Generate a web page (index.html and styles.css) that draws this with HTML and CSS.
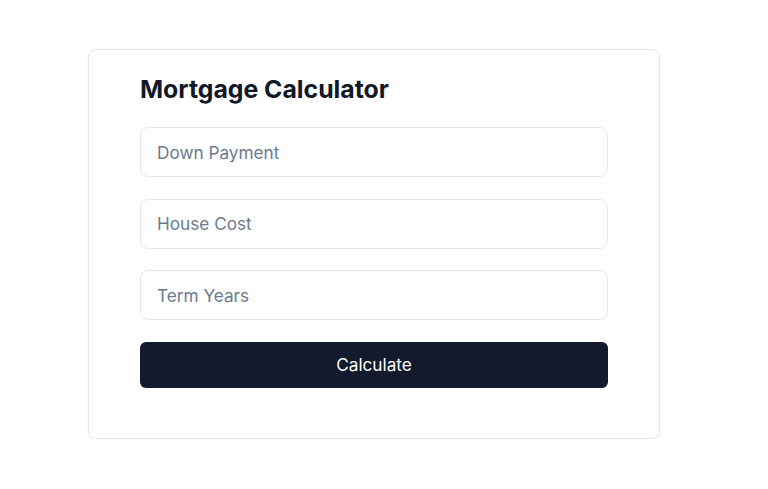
FILE: index.html
```html
<!DOCTYPE html>
<html>
<head>
<meta charset="utf-8">
<link rel="stylesheet" href="styles.css">
</head>
<body>
<div class="card">
  <h1 class="title">Mortgage Calculator</h1>
  <form class="form">
    <input class="field" type="text" placeholder="Down Payment">
    <input class="field" type="text" placeholder="House Cost">
    <input class="field" type="text" placeholder="Term Years">
    <button class="btn" type="button">Calculate</button>
  </form>
</div>
</body>
</html>
```
FILE: styles.css
```css
* { box-sizing: border-box; }
html, body { margin: 0; background: #ffffff; }
body {
  font-family: Inter, "Noto Sans", sans-serif;
  padding: 49px 0 0 88px;
}
.card {
  width: 572px;
  height: 390px;
  border: 1px solid #e5e7eb;
  border-radius: 8px;
  box-shadow: 0 1px 3px rgba(0,0,0,0.06);
  padding: 22px 51px 0 51px;
}
.title {
  margin: 0 0 21px 0;
  font-size: 24.8px;
  line-height: 34px;
  font-weight: 700;
  color: #111827;
}
.form {
  display: flex;
  flex-direction: column;
  gap: 21.5px;
}
.field {
  height: 50px;
  width: 100%;
  border: 1px solid #e2e8f0;
  border-radius: 8px;
  padding: 0 16px;
  font-family: Inter, "Noto Sans", sans-serif;
  font-size: 17.2px;
  color: #111827;
  background: #fff;
  outline: none;
}
.field::placeholder { color: #6b7a8f; }
.btn {
  height: 46px;
  width: 100%;
  border: none;
  border-radius: 6px;
  background: #141a2d;
  color: #ffffff;
  font-family: Inter, "Noto Sans", sans-serif;
  font-size: 17.2px;
  font-weight: 400;
}
```
